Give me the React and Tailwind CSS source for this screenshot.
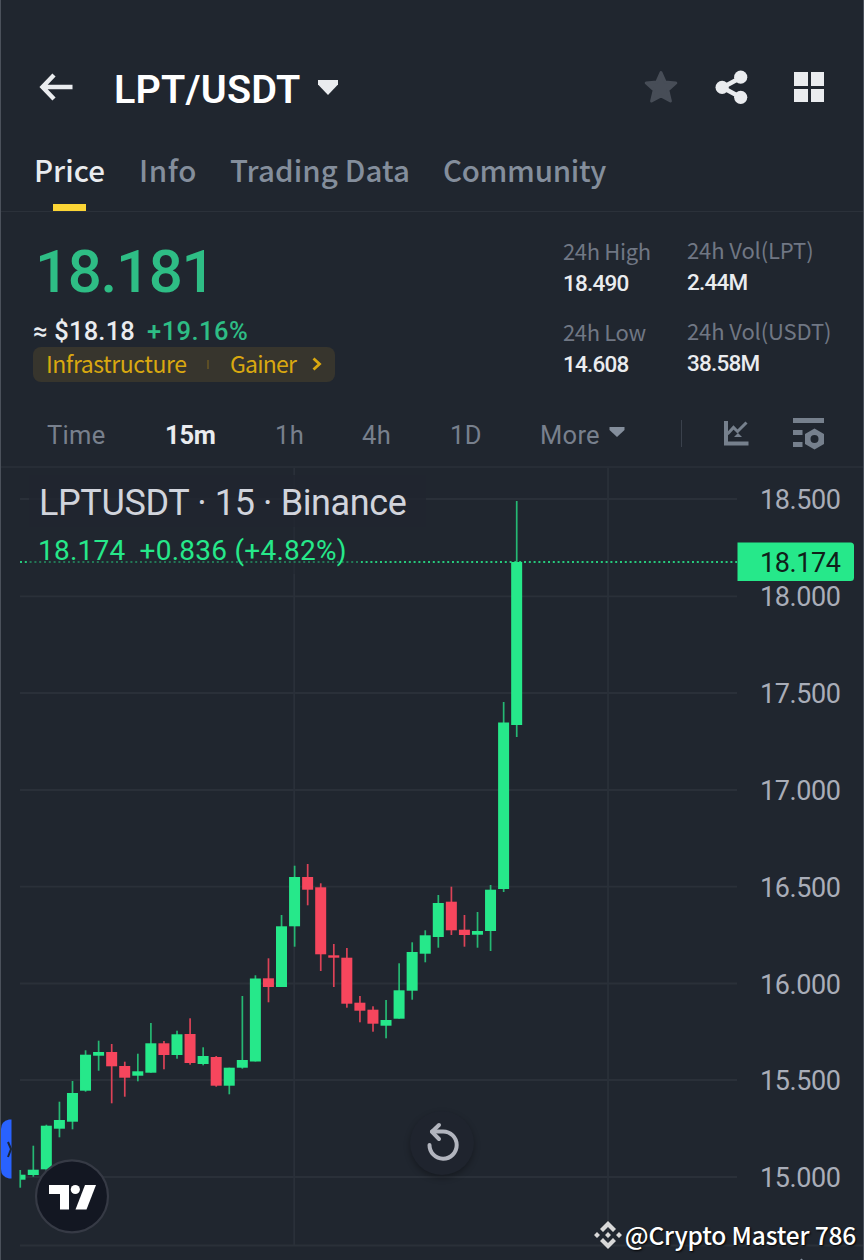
import clsx from 'clsx';

const tabs = [
  { label: 'Price', active: true, className: 'w-[104px] -ml-px mr-px tracking-[0px]' },
  { label: 'Info', className: 'w-[91px] tracking-[0.6px]' },
  { label: 'Trading Data', className: 'w-[213px] tracking-[0.1px]' },
  { label: 'Community', className: '-tracking-[0.3px]' },
];

const stats = [
  { label: '24h High', value: '18.490', className: '-tracking-[0.35px]' },
  { label: '24h Vol(LPT)', value: '2.44M', className: '-tracking-[0.12px]' },
  { label: '24h Low', value: '14.608', className: '-tracking-[0.35px]' },
  { label: '24h Vol(USDT)', value: '38.58M', className: '-tracking-[0.12px]' },
];

const intervals = [
  { label: 'Time', className: 'w-[118px]' },
  { label: '15m', active: true, className: 'w-[110px]' },
  { label: '1h', className: 'w-[87px]' },
  { label: '4h', className: 'w-[88px]' },
  { label: '1D', className: 'w-[90px]' },
];

const priceLevels = [
  ['18.500', 499],
  ['18.000', 596.3],
  ['17.500', 693],
  ['17.000', 790],
  ['16.500', 886.7],
  ['16.000', 983.5],
  ['15.500', 1080],
  ['15.000', 1177],
];

// [high, body top, body bottom, low, direction]
const candles = [
  [1170, 1174.7, 1179.7, 1187.7, 'up'],
  [1145.7, 1169.7, 1175, 1176.7, 'up'],
  [1124.7, 1125.7, 1169.3, 1171.3, 'up'],
  [1101.7, 1120, 1128.7, 1137.3, 'up'],
  [1081, 1093, 1121.7, 1129.3, 'up'],
  [1050.3, 1054.7, 1090.7, 1091.7, 'up'],
  [1040.7, 1052, 1055.7, 1070.7, 'up'],
  [1044, 1052, 1066.3, 1103.3, 'down'],
  [1061.7, 1066, 1077.7, 1096.7, 'down'],
  [1053.7, 1071.3, 1075.7, 1081.3, 'up'],
  [1023, 1043.3, 1072.7, 1072.7, 'up'],
  [1041, 1043.3, 1055, 1069.3, 'down'],
  [1030.7, 1034.3, 1055, 1058.7, 'up'],
  [1018.3, 1034, 1063, 1064.7, 'down'],
  [1047.3, 1056, 1064, 1065.3, 'up'],
  [1056, 1057, 1085.7, 1086.7, 'down'],
  [1067.7, 1067.7, 1085.7, 1094.3, 'up'],
  [996, 1060, 1067.7, 1068.7, 'up'],
  [975.3, 978.5, 1061.5, 1061.5, 'up'],
  [958.3, 978.3, 987, 1002.3, 'down'],
  [915, 926.3, 987, 987, 'up'],
  [865.7, 877, 926.3, 946.7, 'up'],
  [864, 877, 889.7, 905.3, 'down'],
  [883.3, 887.3, 954.3, 971, 'down'],
  [944, 955.3, 957.7, 987, 'down'],
  [948, 957.7, 1003.7, 1007.7, 'down'],
  [996, 1002.7, 1010.7, 1022.3, 'down'],
  [1006.3, 1009.7, 1023.7, 1031.7, 'down'],
  [1000, 1020, 1025.7, 1038.3, 'up'],
  [963.3, 990.3, 1018.7, 1018.7, 'up'],
  [942.3, 952, 990.7, 999.7, 'up'],
  [930.3, 935.3, 953.7, 962.3, 'up'],
  [895, 903, 937, 947.7, 'up'],
  [886.7, 901.7, 930.3, 935, 'down'],
  [915, 929.7, 935, 946.7, 'down'],
  [912, 931, 934.7, 947.7, 'up'],
  [885, 889.7, 931, 951, 'up'],
  [702, 722.5, 889, 892, 'up'],
  [501, 562, 725, 737, 'up'],
];

function Header() {
  return (
    <header className="flex h-[150px] items-center pt-6 pl-[38px] pr-[39px]">
      <svg width="34" height="28" viewBox="0 0 34 28" fill="none" stroke="#eaecef" strokeWidth="4.4">
        <path d="M15 2L3.5 14L15 26M3.5 14H33.5" />
      </svg>
      <h1 className="mt-1.5 ml-[41px] w-[203px] font-[Roboto] text-[39.5px] leading-[50px] font-semibold tracking-[0.2px] whitespace-nowrap text-white">LPT/USDT</h1>
      <svg width="22" height="17" viewBox="0 0 22 17" fill="#eaecef">
        <path d="M1 1H21V5.5L11 16L1 5.5Z" />
      </svg>
      <div className="ml-auto flex items-center">
        <svg width="34" height="34" viewBox="0 0 34 34" fill="#474d57" stroke="#474d57" strokeWidth="3" strokeLinejoin="round">
          <path d="M17 2.5L21.2 12L31.8 13L23.8 20.2L26.4 31L17 26L7.6 31L10.2 20.2L2.2 13L12.8 12Z" />
        </svg>
        <svg className="ml-[37px]" width="34" height="34" viewBox="0 0 34 34" fill="#eaecef">
          <path d="M7.5 17.5L26 7.5M7.5 17.5L26 27.5" stroke="#eaecef" strokeWidth="4.6" />
          <circle cx="7.1" cy="17.3" r="6.6" />
          <circle cx="25.7" cy="7.2" r="6.6" />
          <circle cx="25.7" cy="27.3" r="6.6" />
        </svg>
        <div className="ml-[45px] grid grid-cols-2 gap-[3px]">
          {[0, 1, 2, 3].map((i) => (
            <span key={i} className="size-[13.5px] bg-[#eaecef]" />
          ))}
        </div>
      </div>
    </header>
  );
}

function Tabs() {
  return (
    <nav className="flex h-[62px] border-b border-[#2b313a] pl-[34px] text-[29.5px] leading-[38px] font-medium">
      {tabs.map((tab) => (
        <div key={tab.label} className={clsx('whitespace-nowrap', tab.className, tab.active ? 'text-[#eaecef]' : 'text-[#848e9c]')}>
          {tab.label}
          {tab.active && <div className="mt-4 ml-[19px] h-[7px] w-[33px] bg-[#fcd535]" />}
        </div>
      ))}
    </nav>
  );
}

function Ticker() {
  return (
    <section className="flex h-[184px] justify-between pl-[32px]">
      <div>
        <div className="mt-[28px] ml-[2px] font-[Roboto] text-[60px] leading-[64px] font-medium -tracking-[1.3px] text-[#2ebd85]">18.181</div>
        <div className="mt-[13px] flex gap-3 font-[Roboto] text-[25.5px] leading-[28px] font-medium">
          <span className="tracking-[0.2px] text-[#eaecef]">≈ $18.18</span>
          <span className="tracking-[0.45px] text-[#2ebd85]">+19.16%</span>
        </div>
        <div className="mt-[2px] flex h-[35px] w-[302px] items-center rounded-lg bg-[#37352d] pl-[13px] text-[23px] leading-[33px] -tracking-[0.45px] text-[#d9a810]">
          <span className="h-[35px] w-[161px]">Infrastructure</span>
          <span className="h-[9px] w-[2px] bg-[#5c4e25]" />
          <span className="ml-[21px] h-[35px] w-[82px] -tracking-[0.8px]">Gainer</span>
          <svg className="-mt-0.5" width="10" height="14" viewBox="0 0 10 14" fill="none" stroke="#d9a810" strokeWidth="2.8">
            <path d="M1.5 1.5L7.5 7L1.5 12.5" />
          </svg>
        </div>
      </div>
      <div className="grid w-[300px] grid-cols-[124px_1fr] content-start gap-y-[17px] pt-[22px]">
        {stats.map((stat, i) => (
          <div key={stat.label} className={clsx('whitespace-nowrap', i % 2 === 1 && '-mt-px')}>
            <div className={clsx('text-[22px] leading-[32px] text-[#707784]', stat.className)}>{stat.label}</div>
            <div className="mt-0.5 font-[Roboto] text-[22.5px] leading-[30px] font-medium -tracking-[0.8px] text-[#eaecef]">{stat.value}</div>
          </div>
        ))}
      </div>
    </section>
  );
}

function IntervalBar() {
  return (
    <div className="flex h-[72px] items-center border-b-2 border-[#272d36] pt-[8px] pl-[46px] font-[Roboto] text-[25.5px] tracking-[0.3px] text-[#78808d]">
      {intervals.map((item) => (
        <span key={item.label} className={clsx(item.className, item.active && 'font-bold -tracking-[0.2px] text-[#eaecef]')}>
          {item.label}
        </span>
      ))}
      <span className="w-[69px]">More</span>
      <svg className="-mt-1.5" width="16" height="12" viewBox="0 0 16 12" fill="#848e9c">
        <path d="M0.5 1H15.5V4L8 11L0.5 4Z" />
      </svg>
      <span className="-mt-1 ml-[56px] h-[27px] w-px bg-[#3a414c]" />
      <svg className="-mt-1 ml-[42px]" width="25" height="25" viewBox="0 0 25 25" fill="none" stroke="#76808d">
        <path d="M2 0V22.5H24.5" strokeWidth="4" />
        <path d="M3.5 13L9.5 6.5L13.5 10.5L22.5 1.5" strokeWidth="3" />
        <path d="M14 12L18 16H10Z" fill="#76808d" stroke="none" />
      </svg>
      <svg className="-mt-0.5 ml-[44px]" width="32" height="32" viewBox="0 0 32 32" fill="#76808d">
        <path d="M0 0H31V5H0ZM0 12H9.5V17H0ZM0 24H9.5V29H0Z" />
        <path fillRule="evenodd" d="M21.5 10.5L31 16V26L21.5 31.5L12 26V16ZM21.5 17A4 4 0 1 0 21.5 25A4 4 0 1 0 21.5 17Z" />
      </svg>
    </div>
  );
}

function Candle({ index, candle }) {
  const [high, top, bottom, low, dir] = candle;
  const x = 20.2 + index * 13.065;
  const up = dir === 'up';
  // the first candle is cut off by the left edge of the plot
  const left = index === 0 ? 20.5 : x - 5.5;
  const width = index === 0 ? 5 : 11;
  return (
    <g>
      <rect x={x - 0.8} y={high} width="1.7" height={low - high} fill={up ? '#25b873' : '#dc4257'} />
      <rect x={left} y={top} width={width} height={bottom - top} fill={up ? '#26e88a' : '#f6465d'} />
    </g>
  );
}

function Chart() {
  return (
    <div className="relative h-[792px] font-[Roboto]">
      <svg className="block" width="862" height="792" viewBox="1 468 862 792">
        <g stroke="#2a3039" strokeWidth="1.8">
          {priceLevels.map(([label, y]) => (
            <line key={label} x1="20" x2="737" y1={y} y2={y} />
          ))}
          <line x1="294.2" x2="294.2" y1="468" y2="1245" />
          <line x1="608" x2="608" y1="468" y2="1245" />
          <line x1="20" x2="863" y1="1245.5" y2="1245.5" />
        </g>
        <line x1="20" x2="737" y1="562" y2="562" stroke="#26c97c" strokeWidth="1.8" strokeDasharray="2 2.8" />
        <rect x="29" y="475" width="397" height="52" fill="#20262f" opacity="0.8" />
        <rect x="29" y="527" width="332" height="47" fill="#20262f" opacity="0.5" />
        {candles.map((candle, i) => (
          <Candle key={i} index={i} candle={candle} />
        ))}
        <g fontSize="27" fill="#a9adb8">
          {priceLevels.map(([label, y]) => (
            <text key={label} x="760" y={y + 10} textLength="81">{label}</text>
          ))}
        </g>
        <path d="M737.5 542.5H850.5Q854 542.5 854 546V577.5Q854 581 850.5 581H737.5Z" fill="#26e88a" />
        <text x="760" y="571.5" fontSize="27" textLength="81" fill="#10201a">18.174</text>
        <path d="M800 1260L801.5 1258.5L803 1260Z" fill="#848e9c" />
      </svg>

      <div className="absolute top-[12px] left-[38px] text-[36px] leading-[46px] -tracking-[0.37px] whitespace-pre text-[#d1d4dc]">LPTUSDT · 15 · Binance</div>
      <div className="absolute top-[65px] left-[37px] flex gap-[14px] text-[28px] leading-[36px] tracking-[0.25px] text-[#26e88a]">
        <span>18.174</span>
        <span>+0.836 (+4.82%)</span>
      </div>

      <svg className="absolute top-[651px] -left-px" width="12" height="60" viewBox="0 0 12 60">
        <path d="M11.5 0.5H9Q1 2 1 10V50Q1 58 9 59.5H11.5Z" fill="#2962ff" />
        <path d="M8 23L11 30L8 38" fill="none" stroke="#1c2536" strokeWidth="2" />
      </svg>

      <svg className="absolute top-[690px] left-[33px]" width="76" height="76" viewBox="0 0 76 76">
        <circle cx="38" cy="38.3" r="36" fill="#131722" stroke="#363a45" strokeWidth="2.2" />
        <path d="M15 27H35V51.5H26V36H15Z" fill="#fff" />
        <circle cx="41.3" cy="31.5" r="4.6" fill="#fff" />
        <path d="M51 27H62L52.5 51.5H41.5Z" fill="#fff" />
      </svg>

      <div className="absolute top-[643px] left-[409px] flex size-[64px] items-center justify-center rounded-full bg-[#1f242e] shadow-[0_3px_6px_rgba(0,0,0,0.3)]">
        <svg className="-mt-0.5 ml-px" width="34" height="40" viewBox="0 0 34 40" fill="none" stroke="#b2b5be" strokeWidth="4" strokeLinecap="round" strokeLinejoin="round">
          <path d="M3.5 23A13.6 13.6 0 1 0 17 9.5H6" />
          <path d="M13 3L6 9.8L13 17" />
        </svg>
      </div>

      <div className="absolute top-[746px] right-[7px] flex h-[42px] items-center font-['Noto_Sans_CJK_SC'] text-[24.5px] font-medium -tracking-[0.18px] whitespace-nowrap text-white [text-shadow:1px_1px_2px_#000]">
        <svg className="mr-[3px]" width="28" height="28" viewBox="0 0 28 28" fill="#d8d8d8">
          <path d="M14 0L22 8L19 11L14 6L9 11L6 8ZM14 28L22 20L19 17L14 22L9 17L6 20Z" />
          <path d="M14 11L17 14L14 17L11 14ZM3 11L6 14L3 17L0 14ZM25 11L28 14L25 17L22 14Z" />
        </svg>
        @Crypto Master 786
      </div>
    </div>
  );
}

export default function App() {
  return (
    <div className="h-[1260px] w-[864px] overflow-hidden border-x border-[#4b515b] bg-[#20262f] font-['Noto_Sans_CJK_SC',sans-serif]">
      <Header />
      <Tabs />
      <Ticker />
      <IntervalBar />
      <Chart />
    </div>
  );
}
